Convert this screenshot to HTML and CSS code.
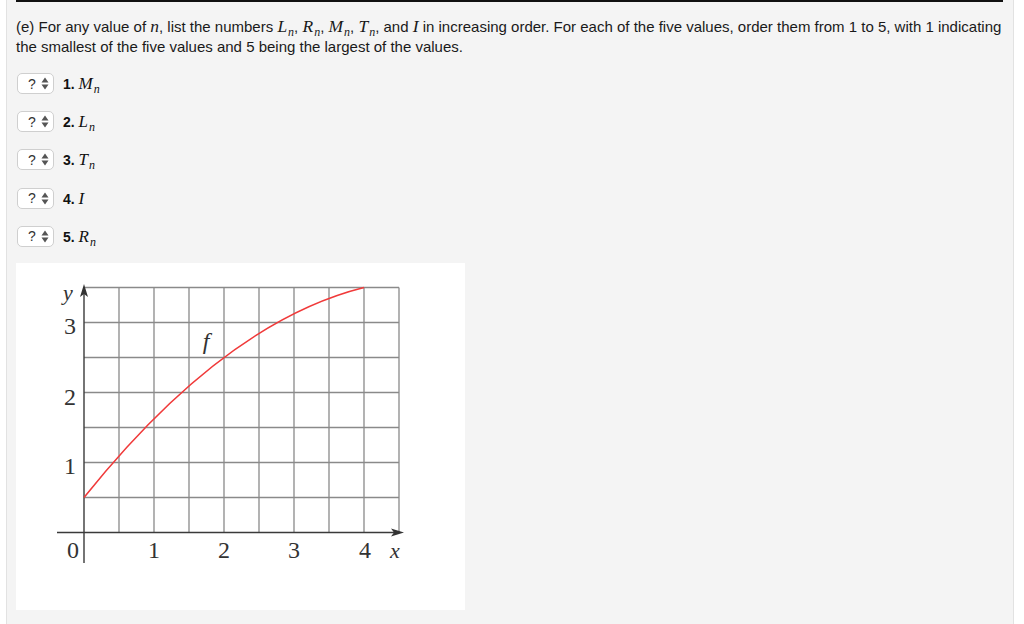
FILE: index.html
```html
<!DOCTYPE html>
<html>
<head>
<meta charset="utf-8">
<link rel="stylesheet" href="styles.css">
</head>
<body>
<div class="panel">
  <div class="rule"></div>
  <p class="question">(e) For any value of <i class="m">n</i>, list the numbers <i class="m">L<sub>n</sub></i>, <i class="m">R<sub>n</sub></i>, <i class="m">M<sub>n</sub></i>, <i class="m">T<sub>n</sub></i>, and <i class="m">I</i> in increasing order. For each of the five values, order them from 1 to 5, with 1 indicating the smallest of the five values and 5 being the largest of the values.</p>
  <ul class="items">
    <li class="item"><span class="sel"><span class="q">?</span><svg class="arr" width="8" height="13" viewBox="0 0 8 13"><path d="M4 0.5 L7.5 5.5 L0.5 5.5 Z M4 12.5 L7.5 7.5 L0.5 7.5 Z" fill="#555"/></svg></span><span class="lab"><b>1.</b> <i class="m">M<sub>n</sub></i></span></li>
    <li class="item"><span class="sel"><span class="q">?</span><svg class="arr" width="8" height="13" viewBox="0 0 8 13"><path d="M4 0.5 L7.5 5.5 L0.5 5.5 Z M4 12.5 L7.5 7.5 L0.5 7.5 Z" fill="#555"/></svg></span><span class="lab"><b>2.</b> <i class="m">L<sub>n</sub></i></span></li>
    <li class="item"><span class="sel"><span class="q">?</span><svg class="arr" width="8" height="13" viewBox="0 0 8 13"><path d="M4 0.5 L7.5 5.5 L0.5 5.5 Z M4 12.5 L7.5 7.5 L0.5 7.5 Z" fill="#555"/></svg></span><span class="lab"><b>3.</b> <i class="m">T<sub>n</sub></i></span></li>
    <li class="item"><span class="sel"><span class="q">?</span><svg class="arr" width="8" height="13" viewBox="0 0 8 13"><path d="M4 0.5 L7.5 5.5 L0.5 5.5 Z M4 12.5 L7.5 7.5 L0.5 7.5 Z" fill="#555"/></svg></span><span class="lab"><b>4.</b> <i class="m">I</i></span></li>
    <li class="item"><span class="sel"><span class="q">?</span><svg class="arr" width="8" height="13" viewBox="0 0 8 13"><path d="M4 0.5 L7.5 5.5 L0.5 5.5 Z M4 12.5 L7.5 7.5 L0.5 7.5 Z" fill="#555"/></svg></span><span class="lab"><b>5.</b> <i class="m">R<sub>n</sub></i></span></li>
  </ul>
  <div class="figure">
    <svg width="449" height="347" viewBox="0 0 449 347">
      <g stroke="#8a8a8a" stroke-width="1.3" fill="none">
        <path d="M103 24.5V269.5 M138 24.5V269.5 M173 24.5V269.5 M208 24.5V269.5 M243 24.5V269.5 M278 24.5V269.5 M313 24.5V269.5 M348 24.5V269.5 M383 24.5V269.5"/>
        <path d="M68 24.5H383 M68 59.5H383 M68 94.5H383 M68 129.5H383 M68 164.5H383 M68 199.5H383 M68 234.5H383"/>
      </g>
      <g stroke="#3a3a3a" stroke-width="1.4" fill="none">
        <path d="M68 28V300"/>
        <path d="M41 269.5H380"/>
      </g>
      <path d="M68 21 L64 34 L68 31 L72 34 Z" fill="#333"/>
      <path d="M388 269.5 L375 265.5 L378 269.5 L375 273.5 Z" fill="#333"/>
      <path d="M68 234.5 Q208 59.5 348 24.5" stroke="#f03a3a" stroke-width="1.6" fill="none"/>
      <g font-family="'Liberation Serif', serif" font-size="24" fill="#333" text-anchor="middle">
        <text x="54" y="71">3</text>
        <text x="54" y="142">2</text>
        <text x="54" y="211">1</text>
        <text x="57" y="295">0</text>
        <text x="138" y="295">1</text>
        <text x="208" y="295">2</text>
        <text x="278" y="295">3</text>
        <text x="349" y="295">4</text>
        <text x="379" y="295" font-style="italic" font-size="22">x</text>
        <text x="52" y="37" font-style="italic" font-size="22">y</text>
        <text x="190" y="86" font-style="italic" font-size="24">f</text>
      </g>
    </svg>
  </div>
</div>
</body>
</html>
```
FILE: styles.css
```css
html, body {
  margin: 0;
  padding: 0;
  background: #ffffff;
}
body {
  font-family: "Liberation Sans", Arial, Helvetica, sans-serif;
  font-size: 14px;
  color: #1a1a1a;
}
.panel {
  margin-left: 6px;
  width: 1008px;
  min-height: 624px;
  box-sizing: border-box;
  background: #f4f4f4;
  border-left: 1px solid #e2e2e2;
  border-right: 1px solid #e2e2e2;
  padding: 0 9px;
}
.rule {
  width: 987px;
  height: 2px;
  background: #111;
}
.question {
  margin: 15px 0 0 0;
  font-size: 15px;
  line-height: 20px;
  width: 990px;
}
.m {
  font-family: "Liberation Serif", "Times New Roman", serif;
  font-style: italic;
  font-size: 17.5px;
  line-height: 1;
}
.m sub {
  font-size: 12px;
  vertical-align: -4px;
  line-height: 0;
  margin-left: 1px;
}
.items {
  list-style: none;
  margin: 16px 0 0 1px;
  padding: 0;
  display: flex;
  flex-direction: column;
  gap: 17.2px;
}
.item {
  display: flex;
  align-items: center;
  height: 21px;
}
.sel {
  box-sizing: border-box;
  width: 37px;
  height: 21px;
  background: #fff;
  border: 1px solid #cfcfcf;
  border-radius: 5px;
  display: flex;
  align-items: center;
  padding-left: 10px;
  gap: 5px;
}
.q {
  font-size: 14px;
  color: #333;
  line-height: 1;
}
.arr {
  display: block;
}
.lab {
  margin-left: 9px;
  font-size: 14px;
  color: #111;
}
.lab .m {
  font-size: 17px;
}
.lab b {
  font-weight: bold;
}
.figure {
  margin-top: 16px;
  width: 449px;
  height: 347px;
  background: #fff;
}
.figure svg {
  display: block;
}
```
